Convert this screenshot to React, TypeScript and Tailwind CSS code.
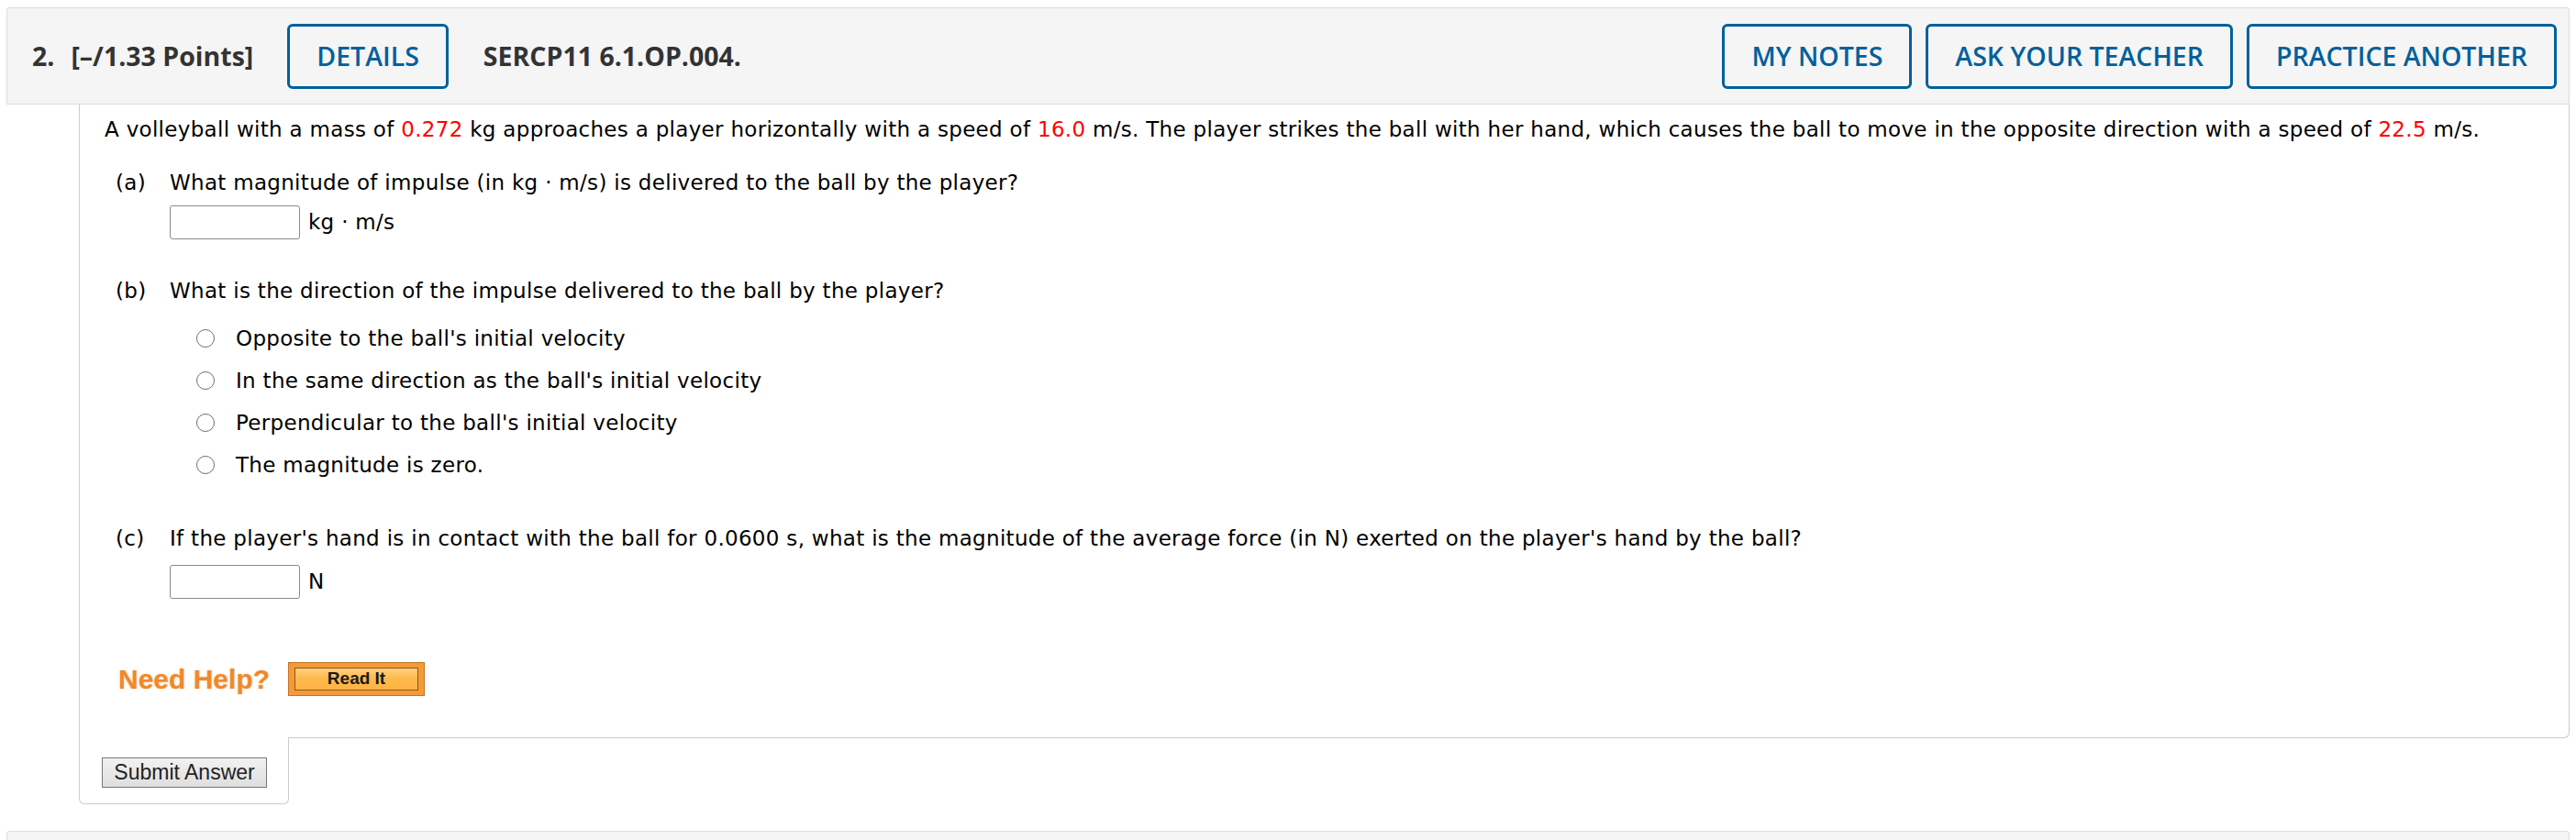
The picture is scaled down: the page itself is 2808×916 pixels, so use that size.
import React from "react";

const body = { fontFamily: '"DejaVu Sans", Verdana, sans-serif' };

function Red({ children }: { children: React.ReactNode }) {
  return <span className="text-[#ff0000]">{children}</span>;
}

function HeaderButton({ label, className = "" }: { label: string; className?: string }) {
  return (
    <button
      type="button"
      className={`h-[71px] rounded-[6px] border-[3px] border-[#00609c] bg-transparent px-[29px] text-[28.5px] font-semibold uppercase text-[#00609c] ${className}`}
    >
      {label}
    </button>
  );
}

function AnswerBox({ unit }: { unit: string }) {
  return (
    <div className="flex items-center pl-[71px]">
      <input
        type="text"
        className="h-[37px] w-[142px] rounded-[3px] border border-[#8a8a8a] bg-white"
      />
      <span className="ml-[9px] leading-[33px]">{unit}</span>
    </div>
  );
}

function Part({ tag, children }: { tag: string; children: React.ReactNode }) {
  return (
    <div className="flex pl-[12px] leading-[33px]">
      <span className="w-[59px] shrink-0">{tag}</span>
      <span>{children}</span>
    </div>
  );
}

function Radio({ label }: { label: string }) {
  return (
    <label className="flex h-[46px] items-center pl-[100px] leading-[33px]">
      <span className="h-[20px] w-[20px] shrink-0 rounded-full border-[1.5px] border-[#6f6f6f] bg-white" />
      <span className="ml-[23px]">{label}</span>
    </label>
  );
}

export default function App() {
  const options = [
    "Opposite to the ball's initial velocity",
    "In the same direction as the ball's initial velocity",
    "Perpendicular to the ball's initial velocity",
    "The magnitude is zero.",
  ];

  return (
    <div className="min-h-screen overflow-hidden bg-white px-[7px] pt-[8px]">
      {/* question header */}
      <div
        className="flex h-[106px] items-center justify-between rounded-t-[3px] border border-[#dcdcdc] bg-[#f5f5f5] pl-[27px] pr-[13px] text-[#333333]"
        style={{ fontFamily: '"Open Sans", sans-serif' }}
      >
        <div className="flex items-center">
          <span className="text-[28.5px] font-bold">2.</span>
          <span className="ml-[18px] text-[28.5px] font-bold">[–/1.33 Points]</span>
          <HeaderButton label="Details" className="ml-[37px]" />
          <span className="ml-[38px] text-[28.5px] font-bold">SERCP11 6.1.OP.004.</span>
        </div>
        <div className="flex items-center gap-[15px]">
          <HeaderButton label="My Notes" />
          <HeaderButton label="Ask Your Teacher" />
          <HeaderButton label="Practice Another" />
        </div>
      </div>

      {/* question body */}
      <div className="ml-[79px]" style={body}>
        <div className="rounded-br-[6px] border-x border-b border-[#cccccc] pb-[45px] pl-[27px] pt-[11px] text-[23px] tracking-[0.3px] text-black">
          <p className="leading-[33px]">
            A volleyball with a mass of <Red>0.272</Red> kg approaches a player horizontally with a speed of{" "}
            <Red>16.0</Red> m/s. The player strikes the ball with her hand, which causes the ball to move in the
            opposite direction with a speed of <Red>22.5</Red> m/s.
          </p>

          <div className="mt-[25px]">
            <Part tag="(a)">What magnitude of impulse (in kg · m/s) is delivered to the ball by the player?</Part>
          </div>
          <div className="mt-[8px]">
            <AnswerBox unit="kg · m/s" />
          </div>

          <div className="mt-[40px]">
            <Part tag="(b)">What is the direction of the impulse delivered to the ball by the player?</Part>
          </div>
          <div className="mt-[12px]">
            {options.map((o) => (
              <Radio key={o} label={o} />
            ))}
          </div>

          <div className="mt-[41px]">
            <Part tag="(c)">
              If the player's hand is in contact with the ball for 0.0600 s, what is the magnitude of the average
              force (in N) exerted on the player's hand by the ball?
            </Part>
          </div>
          <div className="mt-[12px]">
            <AnswerBox unit="N" />
          </div>

          <div className="mt-[69px] flex h-[37px] items-center pl-[15px] tracking-normal">
            <span
              className="text-[30px] font-bold text-[#f0892c] [text-shadow:0_0_2px_rgba(240,137,44,0.55)]"
              style={{ fontFamily: '"Liberation Sans", Arial, sans-serif' }}
            >
              Need Help?
            </span>
            <div className="ml-[20px] h-[37px] w-[149px] border border-[#c27426] bg-[#f59a36] px-[6px] pt-[5px]">
              <div
                className="flex h-[25px] items-center justify-center border border-[#8c5a22] bg-gradient-to-b from-[#ffcf7a] via-[#ffb94c] to-[#ffb443] text-[19px] font-bold text-[#1a1a1a]"
                style={{ fontFamily: '"Liberation Sans", Arial, sans-serif' }}
              >
                Read It
              </div>
            </div>
          </div>
        </div>

        {/* submit tab */}
        <div className="relative -mt-px h-[73px] w-[229px] rounded-b-[6px] border-x border-b border-[#cccccc] bg-white pl-[24px] pt-[22px]">
          <button
            type="button"
            className="h-[33px] w-[180px] border border-[#767676] bg-gradient-to-b from-[#f2f2f2] to-[#dedede] text-[23px] leading-none text-[#222222]"
            style={{ fontFamily: '"Liberation Sans", Arial, sans-serif' }}
          >
            Submit Answer
          </button>
        </div>
      </div>

      {/* next question header peeking in */}
      <div className="mt-[29px] h-[40px] rounded-t-[3px] border border-[#dcdcdc] bg-[#f5f5f5]" />
    </div>
  );
}
